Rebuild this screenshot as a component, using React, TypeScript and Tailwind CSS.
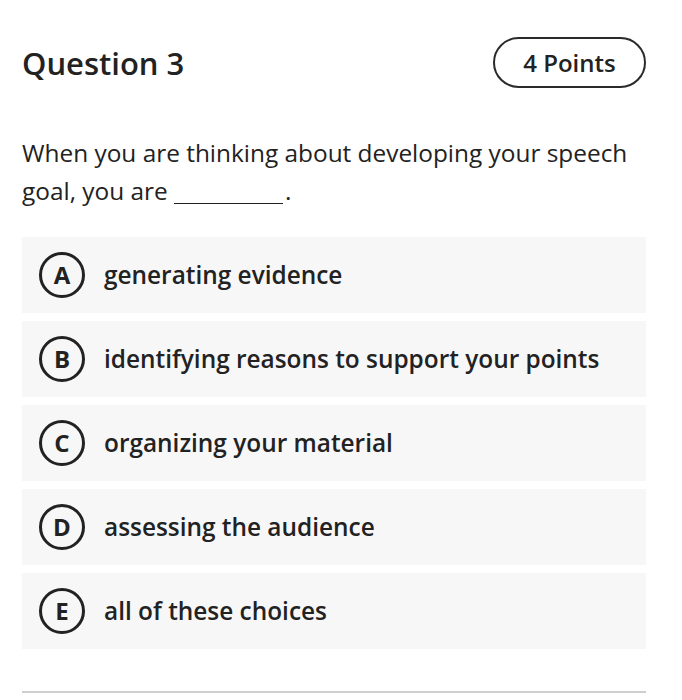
export default function App() {
  const choices = [
    { letter: 'A', text: 'generating evidence' },
    { letter: 'B', text: 'identifying reasons to support your points' },
    { letter: 'C', text: 'organizing your material' },
    { letter: 'D', text: 'assessing the audience' },
    { letter: 'E', text: 'all of these choices' },
  ];

  return (
    <div className="min-h-[700px] w-full bg-white pl-[22px] pr-[36px] pt-[37px] font-['Open_Sans',sans-serif] text-[#222]">
      {/* Header */}
      <div className="flex items-center justify-between">
        <h1 className="text-[31px] font-semibold leading-[40px]">Question 3</h1>
        <div className="flex h-[51px] w-[153px] items-center justify-center rounded-full border-2 border-[#2a2a2a] text-[24px] font-semibold">
          4 Points
        </div>
      </div>

      {/* Prompt */}
      <p className="mt-[46px] text-[24.4px] leading-[38px]">
        When you are thinking about developing your speech goal, you are{' '}
        <span className="mb-[-4px] mr-[2px] inline-block w-[109px] border-b-[1.5px] border-[#222]"></span>.
      </p>

      {/* Choices */}
      <div className="mt-[27px] flex flex-col gap-[8px]">
        {choices.map((c) => (
          <div key={c.letter} className="flex h-[76px] items-center gap-[19px] bg-[#f7f7f7] pl-[17px]">
            <div className="flex h-[46px] w-[46px] shrink-0 items-center justify-center rounded-full border-[3px] border-[#222] text-[24px] font-bold leading-none">
              {c.letter}
            </div>
            <span className="text-[24.4px] font-semibold">{c.text}</span>
          </div>
        ))}
      </div>

      <div className="mt-[42px] h-[2px] w-full bg-[#cfcfcf]" />
    </div>
  );
}
